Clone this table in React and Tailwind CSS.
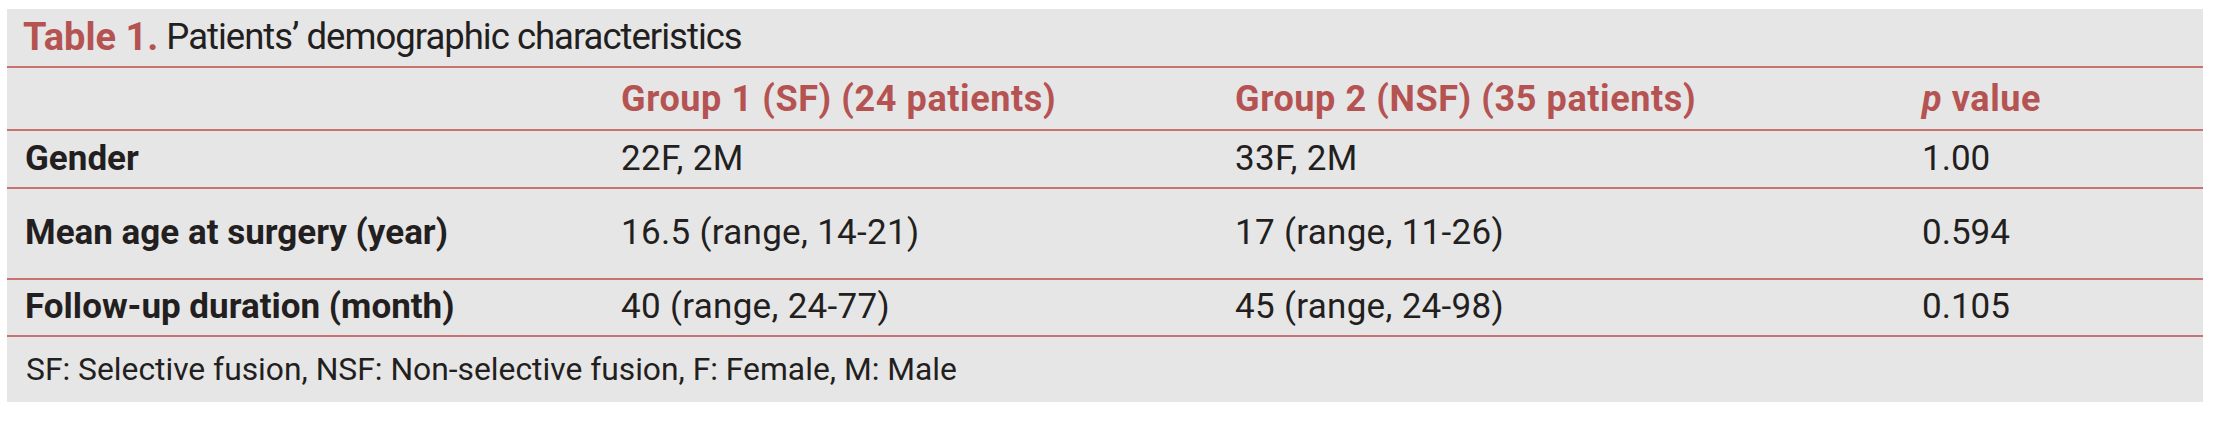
import React from "react";

const rows = [
  { label: "Gender", a: "22F, 2M", b: "33F, 2M", p: "1.00", h: "h-[58px]" },
  { label: "Mean age at surgery (year)", a: "16.5 (range, 14-21)", b: "17 (range, 11-26)", p: "0.594", h: "h-[91px]" },
  { label: "Follow-up duration (month)", a: "40 (range, 24-77)", b: "45 (range, 24-98)", p: "0.105", h: "h-[57px]" },
];

const grid = "grid grid-cols-[596px_614px_687px_1fr] px-[18px] items-center";

export default function App() {
  return (
    <div className="w-[2214px] h-[423px] bg-white pt-[9px] pl-[7px]" style={{ fontFamily: "Roboto, 'Liberation Sans', sans-serif" }}>
      <div className="w-[2196px] h-[393px] bg-[#e6e6e6] flex flex-col text-[#231f20]">
        <div className="h-[59px] flex items-center px-[16px] text-[38px] border-b-2 border-[#c97272]">
          <span className="font-bold text-[#b55352]">Table 1.</span>
          <span className="ml-[8px] text-[36.5px] tracking-[-1px]">Patients’ demographic characteristics</span>
        </div>
        <div className={`${grid} h-[63px] border-b-2 border-[#c97272] text-[36px] tracking-[0.6px] font-bold text-[#b55352]`}>
          <div></div>
          <div>Group 1 (SF) (24 patients)</div>
          <div>Group 2 (NSF) (35 patients)</div>
          <div><i>p</i> value</div>
        </div>
        {rows.map((r) => (
          <div key={r.label} className={`${grid} ${r.h} border-b-2 border-[#c97272] text-[35px]`}>
            <div className="font-bold">{r.label}</div>
            <div className="tracking-[0.3px]">{r.a}</div>
            <div className="tracking-[0.3px]">{r.b}</div>
            <div>{r.p}</div>
          </div>
        ))}
        <div className="flex-1 flex items-center px-[19px] text-[31.8px]">
          SF: Selective fusion, NSF: Non-selective fusion, F: Female, M: Male
        </div>
      </div>
    </div>
  );
}
